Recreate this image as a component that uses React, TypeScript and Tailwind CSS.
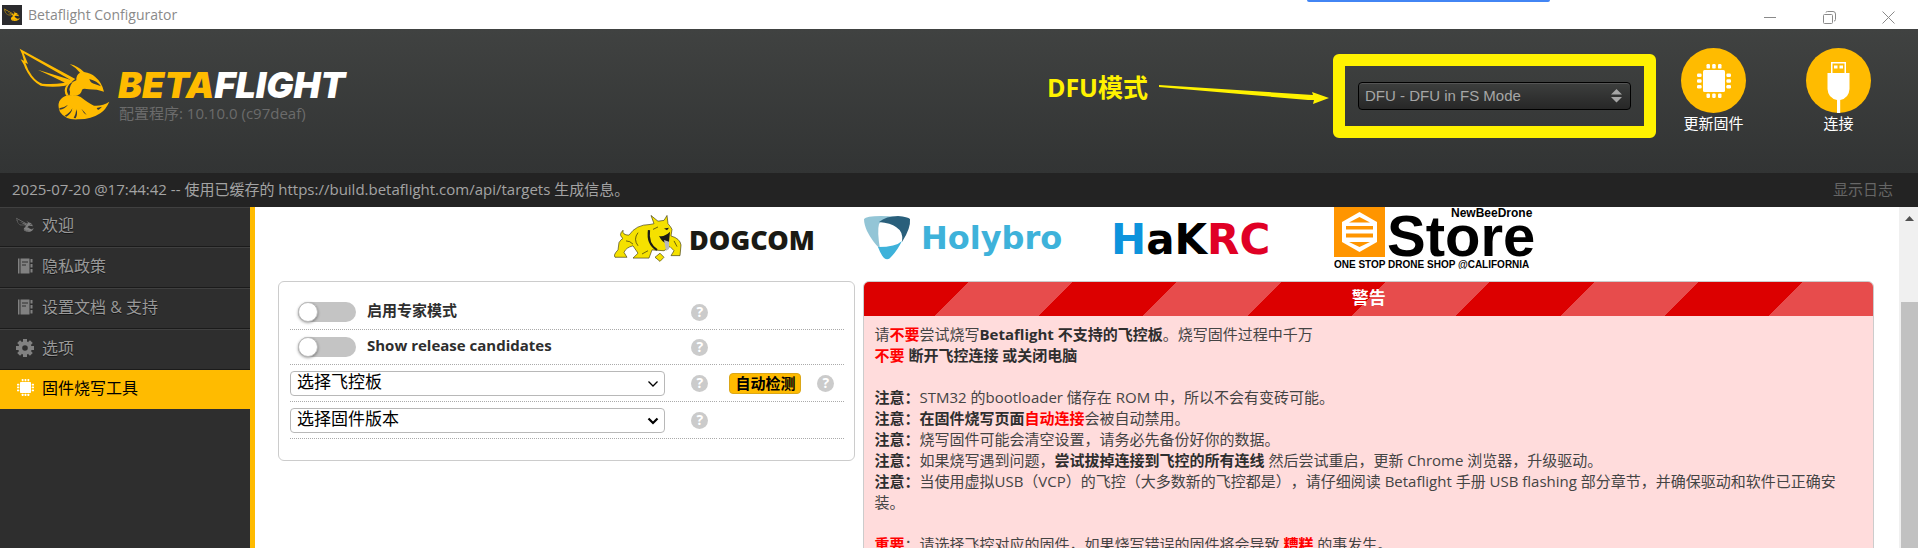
import React, { useState } from "react";
import clsx from "clsx";

function Bee({ className, viewBox = "0 0 330 270" }: { className?: string; viewBox?: string }) {
  return (
    <svg className={className} viewBox={viewBox} fill="currentColor" aria-hidden="true">
      {/* wing */}
      <path
        fillRule="evenodd"
        d="M29 26L196 117L188 123L166 137Q128 143 92 137Q68 124 53 98Q44 84 42 75L32 58L42 62L36 42ZM41 40L54 72L46 68Q54 92 66 107Q80 125 97 131Q130 134 160 129L181 119Z"
      />
      <path d="M83 89L186 121L174 133Q130 110 83 89Z" />
      {/* antenna, head and thorax */}
      <path
        fillRule="evenodd"
        d="M179 72Q206 79 222 96Q243 99 255 110Q276 127 282 155Q262 148 237 148Q218 143 216 150Q213 165 197 167L179 165Q182 156 178 148Q181 134 188 126L199 121Q198 104 210 98Q197 82 179 72ZM238 117Q241 130 256 133L273 139Q262 123 238 117Z"
      />
      <path d="M182 122Q164 138 164 151Q164 162 170 168L176 166Q168 154 172 144Q176 131 188 125Z" />
      {/* abdomen */}
      <path
        fillRule="evenodd"
        d="M174 166Q198 162 212 171Q236 190 252 197Q278 199 298 185Q288 208 271 220Q242 239 203 238Q166 240 150 216Q142 199 148 184Q157 169 174 166ZM148 205Q162 203 174 194Q164 207 149 209ZM164 227Q179 220 187 205Q185 221 169 230ZM191 234Q198 222 199 208Q204 222 197 235ZM214 206Q223 215 230 225Q220 219 214 206ZM260 204L276 200Q270 207 264 210Z"
      />
    </svg>
  );
}

function ChipIcon({ className }: { className?: string }) {
  return (
    <svg className={className} viewBox="0 0 34 34" fill="currentColor" aria-hidden="true">
      <rect x="6" y="6" width="22" height="22" rx="1.5" />
      {[9.5, 15.2, 21].map((p) => (
        <g key={p}>
          <rect x={p} y="0" width="3.5" height="4.6" rx="1.2" />
          <rect x={p} y="29.4" width="3.5" height="4.6" rx="1.2" />
          <rect x="0" y={p} width="4.6" height="3.5" rx="1.2" />
          <rect x="29.4" y={p} width="4.6" height="3.5" rx="1.2" />
        </g>
      ))}
    </svg>
  );
}

function UsbIcon({ className }: { className?: string }) {
  return (
    <svg className={className} viewBox="0 0 65 65" aria-hidden="true">
      <path
        fill="#fff"
        fillRule="evenodd"
        d="M25 14H40V25H43.5V41Q43 50 34.2 52V65H31V52Q22 50 21.5 41V25H25ZM26.5 15.5V25H38.500V15.5ZM28 17.500H31.500V20.500H28ZM33.500 17.500H37V20.500H33.500Z"
      />
    </svg>
  );
}

function BookIcon({ className }: { className?: string }) {
  return (
    <svg className={className} viewBox="0 0 18 18" fill="currentColor" aria-hidden="true">
      <path
        fillRule="evenodd"
        d="M2 1.500H3.500V16.500H2ZM4.500 1.500H13.500V16.500H4.500ZM6 4.500V5.500H12V4.500ZM6 7.500V8.500H10V7.500Z"
      />
      <path d="M14.500 2H16.500V5.500H14.500ZM14.500 7H16.500V10.500H14.500ZM14.500 12H16.500V15.500H14.500Z" />
    </svg>
  );
}

function GearIcon({ className }: { className?: string }) {
  return (
    <svg className={className} viewBox="0 0 18 18" fill="none" stroke="currentColor" aria-hidden="true">
      <circle cx="9" cy="9" r="4.800" strokeWidth="4" />
      {[0, 45, 90, 135].map((a) => (
        <g key={a} transform={`rotate(${a} 9 9)`}>
          <path d="M9 0V3M9 15V18" strokeWidth="4" />
        </g>
      ))}
    </svg>
  );
}

function HelpIcon() {
  return (
    <button
      type="button"
      aria-label="help"
      className="flex size-[17px] shrink-0 items-center justify-center rounded-full bg-[#cbcbcb] text-sm leading-none font-bold text-white"
    >
      ?
    </button>
  );
}

function Dogcom() {
  return (
    <svg width="206" height="62" viewBox="0 0 206 62" role="img" aria-label="Dogcom">
      <g transform="translate(0 6) scale(1 .82)">
        <g stroke="#3a3610" strokeWidth=".7" fill="#f5e100" strokeLinejoin="round">
          <path d="M9 31Q4 27 9 21Q8 27 15 27Q22 14 36 14L40 13L37 3L44 10L50 9L53 3L54 13Q57 17 58 20L57 28Q66 31 67 39L66 52H57L60 46L56 41L50 46L38 45L35 55H19L24 49L19 40Q12 42 10 48L13 54H1Q-1 51 4 45L5 36Q7 32 9 31Z" />
          <path d="M46 49L50 54L46 59L41 54Z" />
        </g>
        <path fill="#1b1b16" d="M45 28Q50 30 56 23L55 35Q50 40 45 28ZM50 19L55 18L53 21Z" />
        <path fill="#b9b9b9" d="M50 33L55 35V44L52 46Z" />
        <path d="M35 21Q33 38 43 45" fill="none" stroke="#1b1b16" strokeWidth="2.200" />
        <path
          d="M24 24Q19 32 24 40M12 34Q16 34 19 38M39 20L44 17M28 50L34 46M60 34L63 41"
          fill="none"
          stroke="#3a3610"
          strokeWidth=".8"
        />
      </g>
      <text x="75" y="43" fontSize="27" className="fill-[#1a1a14] font-['Noto_Sans'] font-black">
        DOGCOM
      </text>
    </svg>
  );
}

function Holybro() {
  return (
    <svg width="206" height="62" viewBox="0 0 206 62" role="img" aria-label="Holybro">
      <path fill="#93c5d6" d="M0 12Q2 9 17 9Q25 9 32 10Q18 11 15 17Q13 24 16 42Q8 34 3 24Q0 17 0 12Z" />
      <path fill="#295f7b" d="M15 15Q22 9 34 9Q44 10 46 12Q47 21 38 35Q40 25 32 20Q27 16 15 15Z" />
      <path fill="#3eb2da" d="M38 34Q32 40 14 40Q17 48 20 51Q24 54 27 50Q33 44 38 34Z" />
      <text x="57" y="42" fontSize="32" className="fill-[#3eb2da] font-['DejaVu_Sans'] font-bold">
        Holybro
      </text>
    </svg>
  );
}

function HakRC() {
  return (
    <svg width="176" height="62" viewBox="0 0 176 62" role="img" aria-label="HakRC">
      <text x="-3" y="47" fontSize="42" className="font-['DejaVu_Sans'] font-bold">
        <tspan fill="#0d93dc">H</tspan>
        <tspan fill="#000">aK</tspan>
        <tspan fill="#e00025">RC</tspan>
      </text>
    </svg>
  );
}

function NewBeeDrone() {
  return (
    <svg width="202" height="62" viewBox="0 0 202 62" role="img" aria-label="NewBeeDrone Store">
      <rect width="51" height="50" fill="#ff9500" />
      <path fill="#fff" d="M25.500 5L43 15V35L25.500 45L8 35V15Z" />
      <path
        fill="#ff9500"
        d="M25.500 10L36 15.500H15ZM12 19H39V22.500H12ZM12 26.500H39V30.500H12ZM15 35H36L25.500 40Z"
      />
      <text x="53" y="49" fontSize="58" className="fill-black font-['Liberation_Sans'] font-bold">
        Store
      </text>
      <text x="117" y="10" fontSize="12" className="fill-black font-['Liberation_Sans'] font-bold">
        NewBeeDrone
      </text>
      <text x="0" y="61" fontSize="10" className="fill-black font-['Liberation_Sans'] font-bold">
        ONE STOP DRONE SHOP @CALIFORNIA
      </text>
    </svg>
  );
}

const menu = [
  { label: "欢迎", icon: <Bee className="size-5" viewBox="28 0 272 270" /> },
  { label: "隐私政策", icon: <BookIcon className="size-[18px]" /> },
  { label: "设置文档 & 支持", icon: <BookIcon className="size-[18px]" /> },
  { label: "选项", icon: <GearIcon className="size-[18px]" /> },
  { label: "固件烧写工具", icon: <ChipIcon className="size-[17px]" />, active: true },
];

function TitleBar() {
  return (
    <div className="relative flex h-[29px] shrink-0 items-center bg-white pl-[2px] text-[#8a8a8a]">
      <div className="flex size-5 items-center justify-center bg-[#2b2b2e] text-[#ffbb00]">
        <Bee className="size-4" viewBox="28 0 272 270" />
      </div>
      <span className="ml-1.5 text-sm">Betaflight Configurator</span>
      <div className="absolute top-0 left-[68.14%] h-[2px] w-[243px] rounded-b bg-[#4285f4]" />
      <div className="ml-auto flex items-center gap-[46px] pt-1.5 pr-[23px]">
        <button type="button" aria-label="Minimize">
          <svg width="13" height="13" fill="none" stroke="currentColor">
            <path d="M0 6.500H12" />
          </svg>
        </button>
        <button type="button" aria-label="Restore">
          <svg width="13" height="13" fill="none" stroke="currentColor">
            <rect x=".5" y="3.500" width="9" height="9" rx="1" />
            <path d="M3 1.500Q3 .5 4.500 .5H10Q12.500 .5 12.500 3V8.500Q12.500 10 11 10" />
          </svg>
        </button>
        <button type="button" aria-label="Close">
          <svg width="13" height="13" fill="none" stroke="currentColor">
            <path d="M.5 .5L12.500 12.500M12.500 .5L.5 12.500" />
          </svg>
        </button>
      </div>
    </div>
  );
}

function Header() {
  return (
    <header className="flex h-36 shrink-0 items-start justify-between bg-linear-to-b from-[#404241] to-[#323434] pr-[22px] pl-2.5">
      <div className="flex items-start pt-[11px]">
        <Bee className="h-[90px] w-[110px] text-[#ffbb00]" />
        <div className="-ml-0.5 pt-[27px]">
          <div className="font-['Inter'] text-[36px] leading-[36px] font-black text-white italic">
            <span className="text-[#ffbb00]">BETA</span>FLIGHT
          </div>
          <div className="pl-px text-[15px] leading-[20px] text-[#6b6b6b]">配置程序: 10.10.0 (c97deaf)</div>
        </div>
      </div>

      <div className="flex items-start">
        <div className="pt-10 text-[25px] leading-[36px] font-bold text-[#fff200]">DFU模式</div>
        <svg className="mt-[50px] ml-2.5" width="175" height="30" fill="#fff200" aria-hidden="true">
          <path d="M1 6L155 16L154 13L171 19L155 25L156 21L150 21L1 8Z" />
        </svg>
        <div className="mt-[25px] rounded-md border-12 border-[#fff200] px-[13px] py-4">
          <div className="relative">
            <select
              aria-label="Port"
              className="block h-7 w-[273px] appearance-none rounded border border-black bg-linear-to-b from-[#3d3f3e] to-[#272727] pl-1.5 font-['Liberation_Sans'] text-[15px] text-[#a6a6a6] shadow-[inset_0_1px_0_#555]"
            >
              <option>DFU - DFU in FS Mode</option>
            </select>
            <svg className="pointer-events-none absolute top-[7px] right-[9px]" width="11" height="14" fill="#a6a6a6">
              <path d="M0 5.500L5.500 0L11 5.500ZM0 8L5.500 13.500L11 8Z" />
            </svg>
          </div>
        </div>
        <div className="flex gap-2.5 pt-[19px]">
          <button type="button" className="flex w-[115px] flex-col items-center text-[15px] leading-[20px] text-white">
            <span className="flex size-[65px] items-center justify-center rounded-full bg-[#ffbb00]">
              <ChipIcon className="size-[34px]" />
            </span>
            更新固件
          </button>
          <button type="button" className="flex w-[115px] flex-col items-center text-[15px] leading-[20px] text-white">
            <span className="size-[65px] rounded-full bg-[#ffbb00]">
              <UsbIcon className="size-[65px]" />
            </span>
            连接
          </button>
        </div>
      </div>
    </header>
  );
}

function Sidebar() {
  return (
    <nav className="w-[255px] shrink-0 border-r-5 border-[#ffbb00] bg-[#2e2e2e]">
      <ul>
        {menu.map((item) => (
          <li key={item.label} className="h-[41px] first:h-10 last:h-[39px]">
            <a
              href="#"
              className={clsx(
                "flex h-full items-center gap-2 pb-1 pl-4 text-base",
                item.active
                  ? "bg-[#ffbb00] text-black"
                  : "border-t border-b border-t-[#404040] border-b-[#1b1b1b] text-[#999] [text-shadow:0_1px_#161616]"
              )}
            >
              <span className={clsx("flex w-[18px] items-center justify-center", item.active ? "text-white" : "text-[#818181]")}>
                {item.icon}
              </span>
              {item.label}
            </a>
          </li>
        ))}
      </ul>
    </nav>
  );
}

function Row({ children, extra, tall }: { children: React.ReactNode; extra?: React.ReactNode; tall?: boolean }) {
  return (
    <div className={clsx("flex gap-0.5", tall ? "h-[37px]" : "h-[35px]")}>
      <div className="flex flex-1 items-center border-b border-dotted border-[#aaa] pr-[9px]">
        {children}
        <HelpIcon />
      </div>
      <div className="flex w-[125px] items-center gap-4 border-b border-dotted border-[#aaa] pl-2.5">{extra}</div>
    </div>
  );
}

function Toggle({ id, label }: { id: string; label: string }) {
  const [on, setOn] = useState(false);
  return (
    <div className="flex flex-1 items-center gap-[11px] pl-2">
      <input
        id={id}
        type="checkbox"
        checked={on}
        onChange={(e) => setOn(e.target.checked)}
        className="h-5 w-[58px] appearance-none rounded-full bg-[#c4c4c4] before:block before:size-5 before:rounded-full before:border before:border-[#bbb] before:bg-white before:shadow-[0_1px_3px_rgba(0,0,0,0.4)] checked:bg-[#ffbb00] checked:before:ml-auto"
      />
      <label htmlFor={id} className="pb-1 text-[15px] font-bold">
        {label}
      </label>
    </div>
  );
}

function Picker({ label, bold }: { label: string; bold?: boolean }) {
  return (
    <div className="relative mr-[26px] flex-1">
      <select
        aria-label={label}
        className="block h-[25px] w-full appearance-none rounded border border-[#b8b8b8] bg-white pb-0.5 pl-1.5 text-[17px] leading-[20px] text-black"
      >
        <option>{label}</option>
      </select>
      <svg className="pointer-events-none absolute top-[9px] right-1.5" width="12" height="8" fill="none" stroke="#000" strokeWidth={bold ? 2.2 : 1.3}>
        <path d="M1.500 1.500L6 6L10.500 1.500" />
      </svg>
    </div>
  );
}

function Options() {
  return (
    <section className="self-start rounded-md border border-[#ccc] pt-[13px] pr-2.5 pb-[21px] pl-[11px]">
      <Row>
        <Toggle id="expert" label="启用专家模式" />
      </Row>
      <Row>
        <Toggle id="rc" label="Show release candidates" />
      </Row>
      <Row
        tall
        extra={
          <>
            <button
              type="button"
              className="h-[21px] w-[72px] rounded border border-[#dba718] bg-[#ffbb00] text-[15px] leading-[17px] font-bold whitespace-nowrap text-black"
            >
              自动检测
            </button>
            <HelpIcon />
          </>
        }
      >
        <Picker label="选择飞控板" />
      </Row>
      <Row tall>
        <Picker label="选择固件版本" bold />
      </Row>
    </section>
  );
}

const Red = ({ children }: { children: React.ReactNode }) => <strong className="text-[#ff0000]">{children}</strong>;

function Warning() {
  return (
    <section className="overflow-hidden rounded-t-md border border-[#ccc] bg-[#ffdcdc]">
      <h2 className="h-[34px] bg-[repeating-linear-gradient(-45deg,#e74c4c_0_10%,#dc0000_10%_20%)] text-center text-[17px] leading-[32px] font-bold text-white">
        警告
      </h2>
      <div className="space-y-[21px] px-2.5 pt-2 pb-5 text-[15px] leading-[21px] text-[#444] [text-spacing-trim:space-all] [&_b]:text-[#2e2e2e]">
        <p>
          请<Red>不要</Red>尝试烧写<b>Betaflight 不支持的飞控板</b>。烧写固件过程中千万
          <br />
          <Red>不要</Red> <b>断开飞控连接 或关闭电脑</b>
        </p>
        <p>
          <b>注意：</b>STM32 的bootloader 储存在 ROM 中，所以不会有变砖可能。
          <br />
          <b>注意：在固件烧写页面</b><Red>自动连接</Red>会被自动禁用。
          <br />
          <b>注意：</b>烧写固件可能会清空设置，请务必先备份好你的数据。
          <br />
          <b>注意：</b>如果烧写遇到问题，<b>尝试拔掉连接到飞控的所有连线</b> 然后尝试重启，更新 Chrome 浏览器，升级驱动。
          <br />
          <b>注意：</b>当使用虚拟USB（VCP）的飞控（大多数新的飞控都是），请仔细阅读 Betaflight 手册 USB flashing 部分章节，并确保驱动和软件已正确安装。
        </p>
        <p>
          <Red>重要</Red>：请选择飞控对应的固件，如果烧写错误的固件将会导致 <Red>糟糕</Red> 的事发生。
        </p>
      </div>
    </section>
  );
}

export default function App() {
  return (
    <div
      lang="zh-CN"
      className="flex h-screen flex-col overflow-hidden bg-white font-['Open_Sans','Noto_Sans_CJK_SC',sans-serif] text-[#2e2e2e]"
    >
      <TitleBar />
      <Header />
      <div className="flex h-[34px] shrink-0 items-center justify-between bg-[#232323] pr-[25px] pb-0.5 pl-3 text-[15px] text-[#a3a3a3]">
        <span>2025-07-20 @17:44:42 -- 使用已缓存的 https://build.betaflight.com/api/targets 生成信息。</span>
        <button type="button" className="text-[#666]">
          显示日志
        </button>
      </div>

      <div className="flex min-h-0 flex-1">
        <Sidebar />
        <main className="min-w-0 flex-1 overflow-hidden">
          <div className="flex h-[74px] justify-center gap-11 pr-1">
            <Dogcom />
            <Holybro />
            <HakRC />
            <NewBeeDrone />
          </div>
          <div className="grid grid-cols-[4fr_7fr] gap-2 pr-[25px] pl-[23px]">
            <Options />
            <Warning />
          </div>
        </main>
        {/* scrollbar */}
        <div className="flex w-[19px] shrink-0 flex-col items-end bg-[#f0f0f0]">
          <svg className="mt-[9px] mr-1" width="9" height="5" fill="#505050">
            <path d="M0 5L4.500 0L9 5Z" />
          </svg>
          <div className="mt-[81px] w-[17px] flex-1 bg-[#c1c1c1]" />
        </div>
      </div>
    </div>
  );
}
